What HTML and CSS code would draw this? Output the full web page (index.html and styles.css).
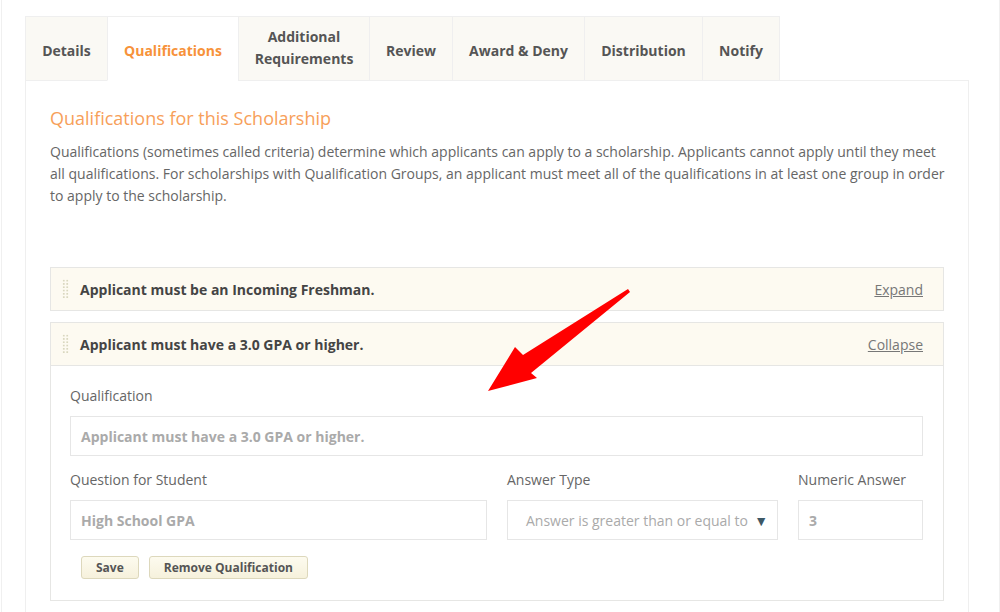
FILE: index.html
```html
<!DOCTYPE html>
<html>
<head>
<meta charset="utf-8">
<link rel="stylesheet" href="styles.css">
</head>
<body>
<div class="page">
  <div class="tabs">
    <div class="tab">Details</div>
    <div class="tab active">Qualifications</div>
    <div class="tab two">Additional<br>Requirements</div>
    <div class="tab">Review</div>
    <div class="tab">Award &amp; Deny</div>
    <div class="tab">Distribution</div>
    <div class="tab">Notify</div>
  </div>
  <div class="panel">
    <h2 class="title">Qualifications for this Scholarship</h2>
    <p class="intro">Qualifications (sometimes called criteria) determine which applicants can apply to a scholarship. Applicants cannot apply until they meet all qualifications. For scholarships with Qualification Groups, an applicant must meet all of the qualifications in at least one group in order to apply to the scholarship.</p>

    <div class="item">
      <div class="item-head">
        <span class="handle"></span>
        <span class="item-title">Applicant must be an Incoming Freshman.</span>
        <a class="toggle">Expand</a>
      </div>
    </div>

    <div class="item">
      <div class="item-head">
        <span class="handle"></span>
        <span class="item-title">Applicant must have a 3.0 GPA or higher.</span>
        <a class="toggle">Collapse</a>
      </div>
      <div class="item-body">
        <div class="label">Qualification</div>
        <div class="input">Applicant must have a 3.0 GPA or higher.</div>
        <div class="row">
          <div class="field">
            <div class="label">Question for Student</div>
            <div class="input">High School GPA</div>
          </div>
          <div class="field">
            <div class="label">Answer Type</div>
            <div class="input select"><span>Answer is greater than or equal to</span><span class="caret">&#9660;</span></div>
          </div>
          <div class="field">
            <div class="label">Numeric Answer</div>
            <div class="input">3</div>
          </div>
        </div>
        <div class="buttons">
          <span class="btn">Save</span>
          <span class="btn">Remove Qualification</span>
        </div>
      </div>
    </div>
  </div>
  <svg class="arrow" width="1000" height="612" viewBox="0 0 1000 612">
    <polygon points="627,289 629,292 530,373 536,378 487,391 514,347 522,355" fill="#ff0000"/>
  </svg>
</div>
</body>
</html>
```

FILE: styles.css
```css
* { box-sizing: border-box; }
html, body { margin: 0; padding: 0; background: #fff; }
body {
  font-family: "Open Sans", "Liberation Sans", Arial, sans-serif;
  width: 1000px;
  height: 612px;
  overflow: hidden;
}
.page {
  position: relative;
  height: 612px;
  border-left: 1px solid #f0f0f0;
  border-right: 1px solid #f0f0f0;
  margin-left: 1px;
  width: 999px;
  padding: 16px 0 0 23px;
}
.tabs {
  display: flex;
  height: 65px;
  position: relative;
  z-index: 2;
}
.tab {
  display: flex;
  align-items: center;
  justify-content: center;
  text-align: center;
  background: #faf9f4;
  border: 1px solid #efefef;
  border-right: none;
  border-bottom: 1px solid #efefef;
  font-weight: 700;
  font-size: 14px;
  line-height: 22px;
  color: #555;
  padding: 4px 16px 0 16px;
}
.tab.two { padding-top: 0; padding-bottom: 2px; }
.tab:last-child { border-right: 1px solid #efefef; }
.tab:nth-child(1) { width: 82px; }
.tab:nth-child(2) { width: 131px; }
.tab:nth-child(3) { width: 131px; }
.tab:nth-child(4) { width: 83px; }
.tab:nth-child(5) { width: 132px; }
.tab:nth-child(6) { width: 118px; }
.tab:nth-child(7) { width: 78px; }
.tab.active {
  background: #fff;
  color: #f7923a;
  border-bottom-color: #fff;
}
.panel {
  margin-top: -1px;
  width: 944px;
  height: 560px;
  border: 1px solid #efefef;
  padding: 25px 24px 0 24px;
  position: relative;
  z-index: 1;
}
.title {
  margin: 0;
  font-weight: 400;
  font-size: 18px;
  line-height: 24px;
  color: #f7a05a;
}
.intro {
  margin: 11px -8px 0 0;
  font-size: 14px;
  line-height: 22px;
  color: #666;
}
.item {
  border: 1px solid #e6e6e4;
  margin-top: 11px;
}
.intro + .item { margin-top: 60px; }
.item-head {
  display: flex;
  align-items: center;
  height: 42px;
  background: #fdfaf1;
  padding: 0 20px 0 11px;
}
.item-body {
  border-top: 1px solid #e6e6e4;
  padding: 20px 20px 21px 19px;
}
.handle {
  width: 7px;
  height: 20px;
  margin-right: 11px;
  background-image: radial-gradient(circle, #d9d7bf 1px, transparent 1.2px);
  background-size: 3.5px 3.3px;
}
.item-title {
  flex: 1;
  font-weight: 700;
  font-size: 14px;
  color: #444;
}
.toggle {
  font-size: 14px;
  color: #777;
  text-decoration: underline;
}
.label {
  font-size: 14px;
  line-height: 20px;
  color: #666;
}
.input {
  margin-top: 10px;
  height: 40px;
  border: 1px solid #e6e6e6;
  display: flex;
  align-items: center;
  padding: 0 10px;
  font-size: 14px;
  font-weight: 700;
  color: #aaa;
}
.row {
  display: grid;
  grid-template-columns: 417px 271px 1fr;
  column-gap: 20px;
  margin-top: 14px;
}
.select {
  font-weight: 400;
  padding: 0 9px 0 18px;
  justify-content: space-between;
  color: #aaa;
}
.caret {
  font-size: 14px;
  color: #3d5866;
}
.buttons {
  display: flex;
  gap: 10px;
  margin: 16px 0 0 11px;
}
.btn {
  display: inline-flex;
  align-items: center;
  height: 23px;
  padding: 0 14px;
  border: 1px solid #ddd8bc;
  border-radius: 3px;
  background: linear-gradient(#fdfbef, #f6f1dc);
  font-size: 12px;
  font-weight: 700;
  color: #555;
}
.arrow {
  position: absolute;
  left: -1px;
  top: 0;
  z-index: 5;
  pointer-events: none;
}
```
